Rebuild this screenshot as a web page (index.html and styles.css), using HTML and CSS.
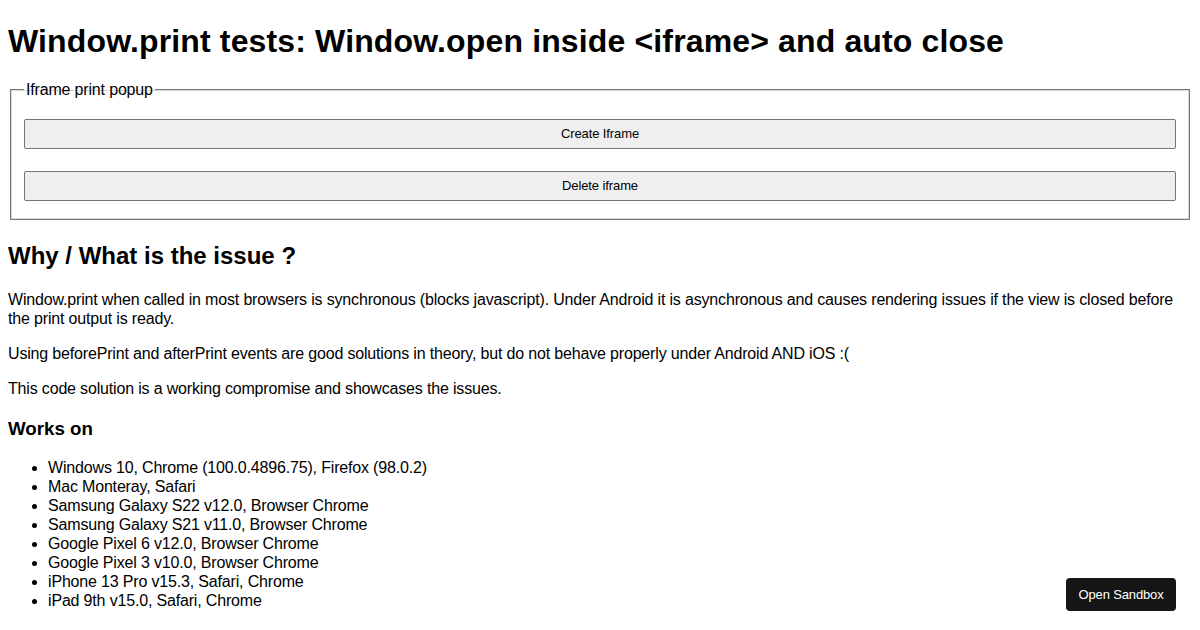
FILE: index.html
```html
<!DOCTYPE html>
<html>
<head>
<meta charset="utf-8">
<link rel="stylesheet" href="styles.css">
</head>
<body>
<h1 class="title">Window.print tests: Window.open inside &lt;iframe&gt; and auto close</h1>
<fieldset class="box">
  <legend class="legend">Iframe print popup</legend>
  <button class="btn">Create Iframe</button>
  <button class="btn">Delete iframe</button>
</fieldset>
<h2 class="sub">Why / What is the issue ?</h2>
<p class="txt">Window.print when called in most browsers is synchronous (blocks javascript). Under Android it is asynchronous and causes rendering issues if the view is closed before the print output is ready.</p>
<p class="txt">Using beforePrint and afterPrint events are good solutions in theory, but do not behave properly under Android AND iOS :(</p>
<p class="txt">This code solution is a working compromise and showcases the issues.</p>
<h3 class="works">Works on</h3>
<ul class="list">
  <li>Windows 10, Chrome (100.0.4896.75), Firefox (98.0.2)</li>
  <li>Mac Monteray, Safari</li>
  <li>Samsung Galaxy S22 v12.0, Browser Chrome</li>
  <li>Samsung Galaxy S21 v11.0, Browser Chrome</li>
  <li>Google Pixel 6 v12.0, Browser Chrome</li>
  <li>Google Pixel 3 v10.0, Browser Chrome</li>
  <li>iPhone 13 Pro v15.3, Safari, Chrome</li>
  <li>iPad 9th v15.0, Safari, Chrome</li>
</ul>
<a class="sandbox">Open Sandbox</a>
</body>
</html>
```
FILE: styles.css
```css
body {
  font-family: "Liberation Sans", Arial, sans-serif;
  color: #000;
  background: #fff;
}
.title {
  margin: 14.5px 0 21.44px 0;
  letter-spacing: 0.14px;
}
.box {
  border: 1px solid #767676;
  box-shadow: inset 0 0 0 1px #d8d8d8;
  padding: 6px 13px 18px 13px;
}
.legend {
  letter-spacing: -0.17px;
}
.btn {
  display: block;
  width: 100%;
  height: 30px;
  margin: 14px 0 22px 0;
  font-family: "Liberation Sans", Arial, sans-serif;
  font-size: 13px;
  letter-spacing: -0.1px;
  background: #efefef;
  border: 1px solid #767676;
  border-radius: 2px;
  color: #000;
}
.btn + .btn {
  margin: 0;
}
.sub {
  margin: 22px 0 20px 0;
}
.txt {
  line-height: 19px;
  letter-spacing: -0.17px;
}
.works {
  margin: 19.72px 0 18.72px 0;
}
.list li {
  line-height: 19px;
  letter-spacing: -0.17px;
}
.sandbox {
  position: fixed;
  right: 24px;
  bottom: 19px;
  background: #151515;
  color: #fff;
  font-size: 13px;
  letter-spacing: -0.15px;
  border-radius: 4px;
  padding: 9px 12.5px;
  font-family: "Liberation Sans", Arial, sans-serif;
}
```
